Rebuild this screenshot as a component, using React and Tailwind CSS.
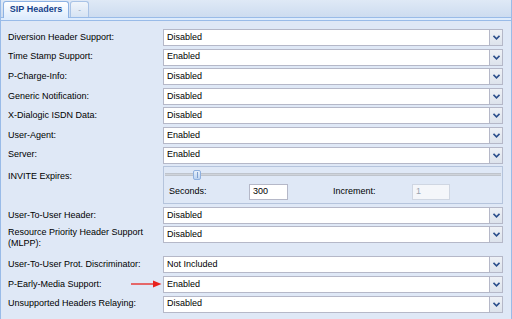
import { useState } from "react";

const FONT = { fontFamily: '"Liberation Sans", Arial, sans-serif' };

const rows = [
  { label: "Diversion Header Support:", value: "Disabled" },
  { label: "Time Stamp Support:", value: "Enabled" },
  { label: "P-Charge-Info:", value: "Disabled" },
  { label: "Generic Notification:", value: "Disabled" },
  { label: "X-Dialogic ISDN Data:", value: "Disabled" },
  { label: "User-Agent:", value: "Enabled" },
  { label: "Server:", value: "Enabled" },
];

const rowsAfter = [
  { label: "User-To-User Header:", value: "Disabled" },
  { label: "Resource Priority Header Support (MLPP):", value: "Disabled", tall: true },
  { label: "User-To-User Prot. Discriminator:", value: "Not Included" },
  { label: "P-Early-Media Support:", value: "Enabled", arrow: true },
  { label: "Unsupported Headers Relaying:", value: "Disabled" },
];

const Chevron = () => (
  <svg width="7" height="5" viewBox="0 0 7 5">
    <path d="M0.5 0.8 L3.5 3.8 L6.5 0.8" fill="none" stroke="#2c4f8c" strokeWidth="1.6" />
  </svg>
);

const Combo = ({ value }) => (
  <div className="flex h-[17px] w-[340px]">
    <div className="flex-1 flex items-center bg-white border border-[#b5b8c8] border-r-0 pl-[3px] text-[9px] text-black">
      {value}
    </div>
    <div className="w-[14px] flex items-center justify-center border border-[#b5b8c8] bg-gradient-to-b from-[#eef1f6] to-[#dde3ec]">
      <Chevron />
    </div>
  </div>
);

const Arrow = () => (
  <svg width="31" height="8" viewBox="0 0 31 8" className="absolute left-[123px] top-[4px]">
    <line x1="0" y1="4" x2="24" y2="4" stroke="#e8211d" strokeWidth="1.3" />
    <path d="M22 0.5 L30.5 4 L22 7.5 Z" fill="#e8211d" />
  </svg>
);

const FieldRow = ({ label, value, tall, arrow }) => (
  <div className={`relative flex ${tall ? "h-[27.5px] items-start" : "h-[17px] items-center"}`}>
    <div className={`w-[155px] text-[9px] text-black ${tall ? "leading-[11px] pt-[0.5px]" : ""}`}>
      {label}
    </div>
    {arrow && <Arrow />}
    <Combo value={value} />
  </div>
);

const Slider = () => (
  <div className="relative h-[10px] mx-[1px]">
    <div className="absolute left-0 right-0 top-[3px] h-[3px] bg-[#cfd3da] border-y border-[#bfc4cc]" />
    <div className="absolute left-[28px] top-0 w-[8px] h-[10px] rounded-[2px] border border-[#8fb0de] bg-gradient-to-b from-[#e8f1fc] to-[#bcd3f0] flex justify-center">
      <div className="w-[1px] h-[6px] mt-[1px] bg-[#7f9fcf]" />
    </div>
  </div>
);

const InviteBlock = () => (
  <div className="flex h-[38px]">
    <div className="w-[155px] pt-[4px] text-[9px] text-black">INVITE Expires:</div>
    <div className="w-[340px] border border-[#b5c4dc] pt-[3px] flex flex-col">
      <Slider />
      <div className="flex items-center mt-[4px] text-[9px] text-black">
        <span className="ml-[5px] w-[80px]">Seconds:</span>
        <div className="w-[39px] h-[16px] bg-white border border-[#b5b8c8] pl-[3px] flex items-center">300</div>
        <span className="ml-[45px] w-[79px]">Increment:</span>
        <div className="w-[38px] h-[16px] bg-[#f4f6fa] border border-[#cfd6e2] pl-[3px] flex items-center text-[#9aa3b0]">1</div>
      </div>
    </div>
  </div>
);

const Tabs = () => {
  const [active] = useState(0);
  return (
    <div>
      <div className="h-[18px] bg-gradient-to-b from-[#dfe9f6] to-[#cddcf0] border-b border-[#99bbe8] flex items-end pl-[2px] gap-[1px]">
        <div
          className={`h-[17px] -mb-[1px] w-[66px] rounded-t-[3px] border border-b-0 border-[#8db2e3] bg-gradient-to-b from-[#ffffff] to-[#deecfd] flex items-center justify-center text-[9px] font-bold text-[#15428b] ${active === 0 ? "" : ""}`}
        >
          SIP Headers
        </div>
        <div className="h-[16px] w-[19px] rounded-t-[3px] border border-b-0 border-[#a9c3e6] bg-gradient-to-b from-[#f0f5fb] to-[#d6e3f3] flex items-center justify-center text-[8px] text-[#8a9bb3]">
          -
        </div>
      </div>
      <div className="h-[3px] bg-[#deecfd] border-b border-[#99bbe8]" />
    </div>
  );
};

export default function App() {
  return (
    <div style={FONT} className="w-[512px] h-[319px] overflow-hidden bg-[#dfe8f6] border-x border-[#99bbe8] flex flex-col">
      <Tabs />
      <div className="pt-[8px] pl-[7px] flex flex-col gap-[2.6px]">
        {rows.map((r) => (
          <FieldRow key={r.label} {...r} />
        ))}
        <InviteBlock />
        {rowsAfter.map((r) => (
          <FieldRow key={r.label} {...r} />
        ))}
      </div>
    </div>
  );
}
